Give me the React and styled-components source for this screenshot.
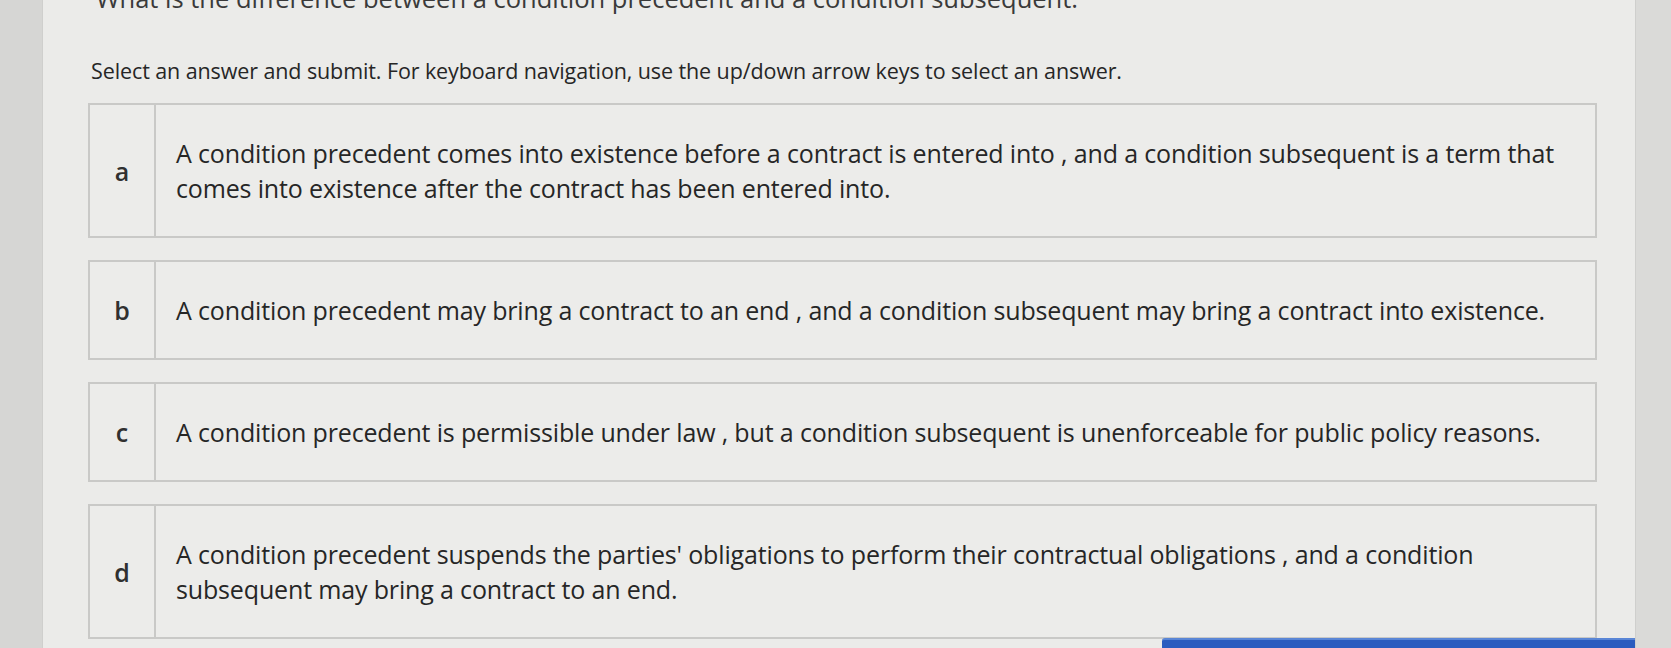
import React, { useState } from 'react';
import styled, { createGlobalStyle } from 'styled-components';

const GlobalStyle = createGlobalStyle`
  * {
    box-sizing: border-box;
  }
  html,
  body {
    margin: 0;
    padding: 0;
    background: #e6e6e4;
  }
`;

const answers = [
  {
    key: 'a',
    text: 'A condition precedent comes into existence before a contract is entered into , and a condition subsequent is a term that comes into existence after the contract has been entered into.',
  },
  {
    key: 'b',
    text: 'A condition precedent may bring a contract to an end , and a condition subsequent may bring a contract into existence.',
  },
  {
    key: 'c',
    text: 'A condition precedent is permissible under law , but a condition subsequent is unenforceable for public policy reasons.',
  },
  {
    key: 'd',
    text: "A condition precedent suspends the parties' obligations to perform their contractual obligations , and a condition subsequent may bring a contract to an end.",
  },
];

export default function App() {
  const [selected, setSelected] = useState(null);

  return (
    <>
      <GlobalStyle />
      <Page>
        <SideRail />
        <Panel>
          <Question>
            What is the difference between a condition precedent and a condition subsequent.
          </Question>
          <Instructions>
            Select an answer and submit. For keyboard navigation, use the up/down arrow keys to select an answer.
          </Instructions>
          <AnswerList role='radiogroup'>
            {answers.map((answer) => (
              <Answer
                key={answer.key}
                role='radio'
                aria-checked={selected === answer.key}
                $active={selected === answer.key}
                onClick={() => setSelected(answer.key)}
              >
                <Letter>{answer.key}</Letter>
                <AnswerText>{answer.text}</AnswerText>
              </Answer>
            ))}
          </AnswerList>
          <SubmitBar>
            <SubmitButton disabled={!selected}>Submit</SubmitButton>
          </SubmitBar>
        </Panel>
        <SideRail $right />
      </Page>
    </>
  );
}

const Page = styled.div`
  display: flex;
  height: 648px;
  overflow: hidden;
  font-family: 'Open Sans', 'Liberation Sans', sans-serif;
  color: #262626;
`;

const SideRail = styled.div`
  flex: 0 0 ${(p) => (p.$right ? '36px' : '43px')};
  background: ${(p) => (p.$right ? '#dadad8' : '#d6d6d4')};
  border-${(p) => (p.$right ? 'left' : 'right')}: 1px solid #cfcfcd;
`;

const Panel = styled.main`
  flex: 1;
  display: flex;
  flex-direction: column;
  padding: 0 38px 0 45px;
  background: #ebebe9;
`;

const Question = styled.h1`
  margin: -17px 0 0 8px;
  font-size: 25.5px;
  line-height: 30px;
  font-weight: 400;
  color: #3a3a3a;
  white-space: nowrap;
`;

const Instructions = styled.p`
  margin: 44px 0 0 3px;
  font-size: 21.5px;
  line-height: 28px;
  letter-spacing: -0.1px;
`;

const AnswerList = styled.div`
  display: flex;
  flex-direction: column;
  gap: 22px;
  margin-top: 18px;
`;

const Answer = styled.div`
  display: grid;
  grid-template-columns: 66px 1fr;
  border: 2px solid #c9c9c7;
  background: ${(p) => (p.$active ? '#e2e8f4' : '#ececea')};
  cursor: pointer;
`;

const Letter = styled.div`
  display: flex;
  align-items: center;
  justify-content: center;
  border-right: 2px solid #c9c9c7;
  font-size: 25px;
  font-weight: 600;
  color: #303030;
`;

const AnswerText = styled.div`
  padding: 30.5px 24px 30.5px 20px;
  font-size: 25px;
  line-height: 35px;
  letter-spacing: -0.15px;
`;

const SubmitBar = styled.div`
  display: flex;
  justify-content: flex-end;
  margin: -1px -47px 0 0;
`;

const SubmitButton = styled.button`
  flex: 0 0 482px;
  height: 48px;
  border: none;
  border-top: 2px solid #5a86d6;
  border-radius: 3px 3px 0 0;
  background: #2a5cbf;
  color: #fff;
  font-family: inherit;
  font-size: 20px;
  cursor: pointer;
`;
